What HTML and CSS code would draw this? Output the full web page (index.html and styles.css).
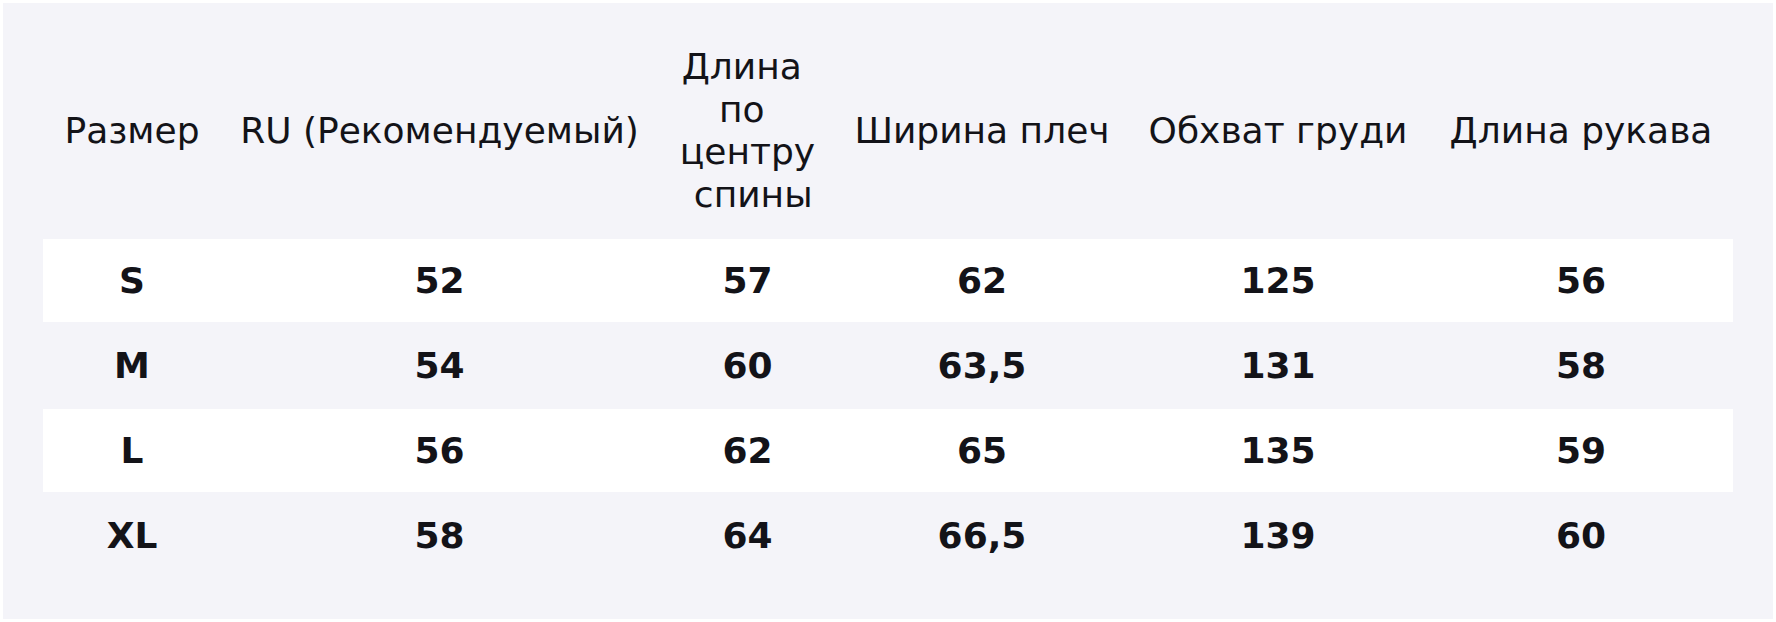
FILE: index.html
```html
<!DOCTYPE html>
<html lang="ru">
<head>
<meta charset="utf-8">
<title>Таблица размеров</title>
<link rel="stylesheet" href="styles.css">
</head>
<body>
<div class="sheet">
  <table class="sizes">
    <colgroup>
      <col class="c-size">
      <col class="c-ru">
      <col class="c-back">
      <col class="c-shoulder">
      <col class="c-chest">
      <col class="c-sleeve">
    </colgroup>
    <thead>
      <tr>
        <th>Размер</th>
        <th>RU (Рекомендуемый)</th>
        <th class="wrap">Длина&nbsp; по&nbsp; центру &nbsp;спины</th>
        <th>Ширина плеч</th>
        <th>Обхват груди</th>
        <th>Длина рукава</th>
      </tr>
    </thead>
    <tbody>
      <tr class="odd"><td>S</td><td>52</td><td>57</td><td>62</td><td>125</td><td>56</td></tr>
      <tr><td>M</td><td>54</td><td>60</td><td>63,5</td><td>131</td><td>58</td></tr>
      <tr class="odd"><td>L</td><td>56</td><td>62</td><td>65</td><td>135</td><td>59</td></tr>
      <tr><td>XL</td><td>58</td><td>64</td><td>66,5</td><td>139</td><td>60</td></tr>
    </tbody>
  </table>
</div>
</body>
</html>
```

FILE: styles.css
```css
html, body {
  background: #ffffff;
}
body {
  margin: 3px;
  font-family: "DejaVu Sans", "Liberation Sans", sans-serif;
  color: #131318;
}
.sheet {
  background: #f4f4f9;
  padding: 40px;
}
.sizes {
  width: 100%;
  table-layout: fixed;
  border-collapse: separate;
  border-spacing: 0 2px;
}
.c-size { width: 178px; }
.c-ru { width: 437px; }
.c-back { width: 179px; }
.c-shoulder { width: 290px; }
.c-chest { width: 302px; }
.c-sleeve { width: 304px; }

.sizes th {
  font-size: 36px;
  font-weight: 400;
  line-height: 42.7px;
  text-align: center;
  vertical-align: middle;
  white-space: nowrap;
  padding: 1px 8px 20px;
}
.sizes th.wrap {
  white-space: normal;
  padding-left: 21px;
  padding-right: 21px;
}
.sizes td {
  font-size: 36px;
  font-weight: 700;
  line-height: 43px;
  text-align: center;
  vertical-align: middle;
  padding: 20px 8px;
}
.sizes tr.odd td {
  background: #ffffff;
}
```
